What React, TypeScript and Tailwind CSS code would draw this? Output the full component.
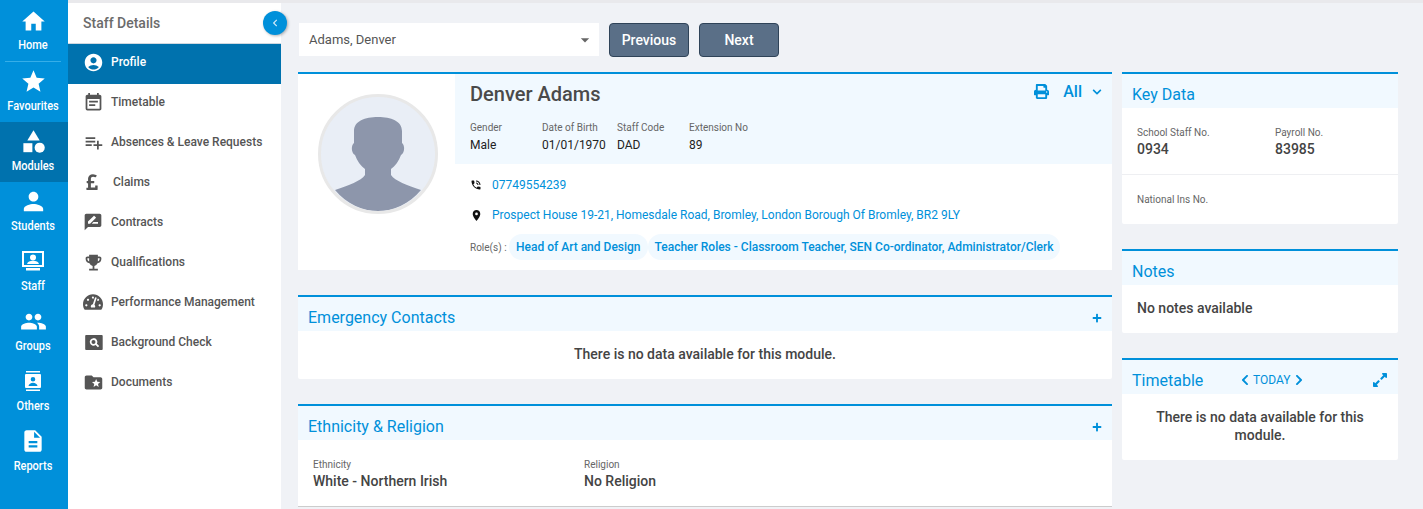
import React from "react";
import { MdHome, MdStar, MdCategory, MdPerson, MdPeople, MdDescription, MdAccountCircle, MdEventNote, MdPlaylistAdd, MdRateReview, MdEmojiEvents, MdFolderSpecial, MdPhoneInTalk, MdPlace, MdArrowDropDown } from "react-icons/md";
import { FaPoundSign, FaPrint, FaTachometerAlt, FaExpandAlt, FaChevronLeft, FaChevronRight, FaChevronDown, FaPlus } from "react-icons/fa";

const StaffIcon = () => (
  <svg viewBox="0 0 24 24" className="w-[24px] h-[24px]" fill="white">
    <path fillRule="evenodd" d="M1 2h22v16H1zM3 4v12h18V4z" />
    <circle cx="12" cy="8.500" r="3" />
    <path d="M6 15c.5-2.500 3-3.200 6-3.200s5.500.7 6 3.200z" />
    <rect x="5" y="19" width="14" height="2.500" />
  </svg>
);

const OthersIcon = () => (
  <svg viewBox="0 0 16 20" className="w-[16px] h-[20px]" fill="white">
    <rect x="1" y="0" width="14" height="1.500" />
    <rect x="1" y="18.500" width="14" height="1.500" />
    <path fillRule="evenodd" d="M1 3h14a1 1 0 0 1 1 1v12a1 1 0 0 1-1 1H1a1 1 0 0 1-1-1V4a1 1 0 0 1 1-1zm7 3a2.300 2.300 0 1 0 0 4.600A2.300 2.300 0 0 0 8 6zm-4.500 9h9c0-2-2.500-3.300-4.500-3.300S3.500 13 3.500 15z" />
  </svg>
);

const CheckIcon = () => (
  <svg viewBox="0 0 24 24" className="w-[21px] h-[21px]" fill="#555">
    <path fillRule="evenodd" d="M3.500 3.500h18a1 1 0 0 1 1 1v15a1 1 0 0 1-1 1h-18a1 1 0 0 1-1-1v-15a1 1 0 0 1 1-1zM12 7a4.300 4.300 0 1 0 2.400 7.900l2.600 2.600 1.500-1.500-2.600-2.600A4.300 4.300 0 0 0 12 7zm0 2a2.300 2.300 0 1 1 0 4.600A2.300 2.300 0 0 1 12 9z" />
  </svg>
);

const navs = [
  { label: "Home", icon: <MdHome size={27} /> },
  { label: "Favourites", icon: <MdStar size={27} /> },
  { label: "Modules", icon: <MdCategory size={27} />, active: true },
  { label: "Students", icon: <MdPerson size={29} /> },
  { label: "Staff", icon: <StaffIcon /> },
  { label: "Groups", icon: <MdPeople size={27} /> },
  { label: "Others", icon: <OthersIcon /> },
  { label: "Reports", icon: <MdDescription size={26} /> },
];

const items = [
  { label: "Profile", icon: <MdAccountCircle size={21} />, active: true },
  { label: "Timetable", icon: <MdEventNote size={21} /> },
  { label: "Absences & Leave Requests", icon: <MdPlaylistAdd size={21} /> },
  { label: "Claims", icon: <FaPoundSign size={18} />, claims: true },
  { label: "Contracts", icon: <MdRateReview size={20} /> },
  { label: "Qualifications", icon: <MdEmojiEvents size={21} /> },
  { label: "Performance Management", icon: <FaTachometerAlt size={20} /> },
  { label: "Background Check", icon: <CheckIcon /> },
  { label: "Documents", icon: <MdFolderSpecial size={21} /> },
];

function Field({ label, value, className }: { label: string; value: string; className: string }) {
  return (
    <div className={className}>
      <div className="text-[10px] leading-[14px] text-[#666]">{label}</div>
      <div className="text-[12px] leading-[16px] mt-[2px] text-[#222]">{value}</div>
    </div>
  );
}

function Head({ title, right }: { title: string; right?: React.ReactNode }) {
  return (
    <div className="h-[34px] bg-[#f1f9ff] flex items-center justify-between pl-[10px] pr-[10px] text-[#0090da]">
      <span className="text-[16px] leading-[20px] mt-[8px]">{title}</span>
      {right}
    </div>
  );
}

const plus = <FaPlus size={10} className="mt-[8px] text-[#0090da]" />;

function KeyVal({ label, value, className }: { label: string; value: string; className: string }) {
  return (
    <div className={className}>
      <div className="text-[10px] leading-[14px] text-[#666]">{label}</div>
      <div className="text-[14px] leading-[18px] font-medium text-[#444]">{value}</div>
    </div>
  );
}

export default function App() {
  return (
    <div className="w-[1423px] h-[509px] overflow-hidden flex bg-[#f0f2f6] font-['Roboto',sans-serif]">
      <nav className="w-[68px] shrink-0 bg-[#0090da] pt-[2px] flex flex-col">
        {navs.map((n, i) => (
          <div key={n.label} className={`relative h-[60px] pr-[2px] flex flex-col items-center text-white ${n.active ? "bg-[#0072ae]" : ""}`}>
            <div className="h-[24px] mt-[7px] flex items-center justify-center">{n.icon}</div>
            <div className={`text-[11px] leading-[14px] font-medium scale-y-110 ${i === 0 ? "mt-[6px]" : "mt-[7px]"}`}>{n.label}</div>
            {i === 0 && <div className="absolute left-[5px] right-[7px] bottom-0 h-px bg-[#36aee8]" />}
          </div>
        ))}
      </nav>
      <div className="flex-1 flex flex-col min-w-0">
        <div className="h-[3px] bg-[#e9e9ec] shrink-0" />
        <div className="flex flex-1 min-h-0">
          <aside className="relative w-[213px] shrink-0 bg-white">
            <div className="h-[41px] border-b border-[#cfd8e0] pl-[15px] flex items-center text-[14px] font-medium text-[#6b6b6b]">Staff Details</div>
            {items.map((it) => (
              <div key={it.label} className={`h-[40px] flex items-center pl-[15px] pb-[4px] text-[12px] font-medium ${it.active ? "bg-[#0072ae] text-white" : "text-[#555]"}`}>
                <span className="w-[28px] shrink-0 flex items-center">{it.icon}</span>
                <span className={it.claims ? "ml-[2px]" : ""}>{it.label}</span>
              </div>
            ))}
            <div className="absolute left-[195px] top-[8px] w-[24px] h-[24px] rounded-full bg-[#0090da] shadow-[1px_1px_3px_rgba(0,0,0,0.3)] flex items-center justify-center">
              <FaChevronLeft size={8} className="text-[#cfe9f8]" />
            </div>
          </aside>
          <main className="flex-1 min-w-0 pl-[17px] pt-[20px] pr-[25px]">
            <div className="flex items-start h-[34px] ml-[1px]">
              <div className="w-[300px] h-[33px] bg-white flex items-center justify-between pl-[10px] pr-[4px] text-[13px] text-[#555]">
                Adams, Denver
                <MdArrowDropDown size={20} className="text-[#666]" />
              </div>
              <button className="ml-[10px] w-[80px] h-[34px] rounded-[4px] bg-[#5a6f87] border border-[#2f4358] text-white text-[14px] font-medium">Previous</button>
              <button className="ml-[10px] w-[80px] h-[34px] rounded-[4px] bg-[#5a6f87] border border-[#2f4358] text-white text-[14px] font-medium">Next</button>
            </div>
            <div className="flex gap-[10px] mt-[15px]">
              <div className="w-[814px] shrink-0">
                <section className="h-[198px] bg-white border-t-2 border-[#0090da] flex">
                  <div className="w-[157px] shrink-0 pt-[20px] pl-[20px]">
                    <div className="w-[120px] h-[120px] rounded-full border-[3px] border-[#e8e8e8] bg-[#e9eef6] overflow-hidden">
                      <svg viewBox="0 0 114 114" className="w-full h-full" fill="#8d96ab">
                        <path d="M33 34C33 24 44 20 57 20C70 20 81 24 81 34L81 46C84 48 84 56 80 58C78 64 74 69 70 72L70 78C74 84 86 88 100 93C88 107 73 114 57 114C41 114 26 107 14 93C28 88 40 84 44 78L44 72C40 69 36 64 34 58C30 56 30 48 33 46Z" />
                      </svg>
                    </div>
                  </div>
                  <div className="flex-1 min-w-0">
                    <div className="relative h-[90px] bg-[#f1f9ff] pl-[15px]">
                      <div className="text-[20px] leading-[24px] pt-[8px] font-medium text-[#4a4a4a] h-[40px]">Denver Adams</div>
                      <div className="flex mt-[7px]">
                        <Field label="Gender" value="Male" className="w-[72px]" />
                        <Field label="Date of Birth" value="01/01/1970" className="w-[75px]" />
                        <Field label="Staff Code" value="DAD" className="w-[72px]" />
                        <Field label="Extension No" value="89" className="w-[80px]" />
                      </div>
                      <div className="absolute top-[8px] right-[10px] flex items-center text-[#0090da]">
                        <FaPrint size={15} className="-mt-[1px]" />
                        <span className="ml-[14px] text-[16px] leading-[20px] font-medium">All</span>
                        <FaChevronDown size={10} className="ml-[10px]" />
                      </div>
                    </div>
                    <div className="pl-[15px]">
                      <div className="flex items-center h-[20px] mt-[11px] text-[12px] text-[#0090da]">
                        <span className="w-[22px] shrink-0 flex"><MdPhoneInTalk size={12} className="text-[#111]" /></span>
                        07749554239
                      </div>
                      <div className="flex items-center h-[20px] mt-[10px] text-[12px] text-[#0090da]">
                        <span className="w-[22px] shrink-0 flex"><MdPlace size={13} className="text-[#111]" /></span>
                        Prospect House 19-21, Homesdale Road, Bromley, London Borough Of Bromley, BR2 9LY
                      </div>
                      <div className="flex items-center mt-[9px]">
                        <span className="text-[10px] text-[#666] w-[39px] shrink-0">Role(s) :</span>
                        <span className="h-[26px] px-[7px] rounded-full bg-[#f1f9ff] text-[#0090da] text-[12px] font-medium flex items-center">Head of Art and Design</span>
                        <span className="h-[26px] px-[7px] rounded-full bg-[#f1f9ff] text-[#0090da] text-[12px] font-medium flex items-center">Teacher Roles - Classroom Teacher, SEN Co-ordinator, Administrator/Clerk</span>
                      </div>
                    </div>
                  </div>
                </section>
                <section className="mt-[25px] h-[84px] bg-white border-t-2 border-[#0090da] rounded-b-[2px]">
                  <Head title="Emergency Contacts" right={plus} />
                  <div className="text-center text-[14px] font-medium text-[#444] leading-[18px] pt-[14px]">There is no data available for this module.</div>
                </section>
                <section className="mt-[25px] h-[103px] bg-white border-t-2 border-[#0090da] border-b border-b-[#ccc]">
                  <div className="h-[35px]"><Head title="Ethnicity & Religion" right={plus} /></div>
                  <div className="flex pl-[15px] pt-[17px]">
                    <KeyVal label="Ethnicity" value="White - Northern Irish" className="w-[271px]" />
                    <KeyVal label="Religion" value="No Religion" className="w-[200px]" />
                  </div>
                </section>
              </div>
              <div className="w-[276px] shrink-0">
                <section className="h-[152px] bg-white border-t-2 border-[#0090da] rounded-b-[2px]">
                  <Head title="Key Data" />
                  <div className="h-[67px] flex pl-[15px] pt-[18px] border-b border-[#eeeff2]">
                    <KeyVal label="School Staff No." value="0934" className="w-[138px]" />
                    <KeyVal label="Payroll No." value="83985" className="w-[100px]" />
                  </div>
                  <div className="pl-[15px] pt-[18px] text-[10px] leading-[14px] text-[#666]">National Ins No.</div>
                </section>
                <section className="mt-[25px] h-[84px] bg-white border-t-2 border-[#0090da] rounded-b-[2px]">
                  <Head title="Notes" />
                  <div className="pl-[15px] pt-[14px] text-[14px] leading-[18px] font-medium text-[#444]">No notes available</div>
                </section>
                <section className="mt-[25px] h-[102px] bg-white border-t-2 border-[#0090da] rounded-b-[2px]">
                  <div className="relative">
                    <Head title="Timetable" right={<FaExpandAlt size={16} className="mt-[6px]" />} />
                    <div className="absolute left-[117px] top-[11px] flex items-center text-[#0090da] text-[12px]">
                      <FaChevronLeft size={12} />
                      <span className="mx-[2px]">TODAY</span>
                      <FaChevronRight size={12} />
                    </div>
                  </div>
                  <div className="px-[30px] pt-[14px] text-center text-[14px] leading-[18px] font-medium text-[#444]">There is no data available for this module.</div>
                </section>
              </div>
            </div>
          </main>
        </div>
      </div>
    </div>
  );
}
